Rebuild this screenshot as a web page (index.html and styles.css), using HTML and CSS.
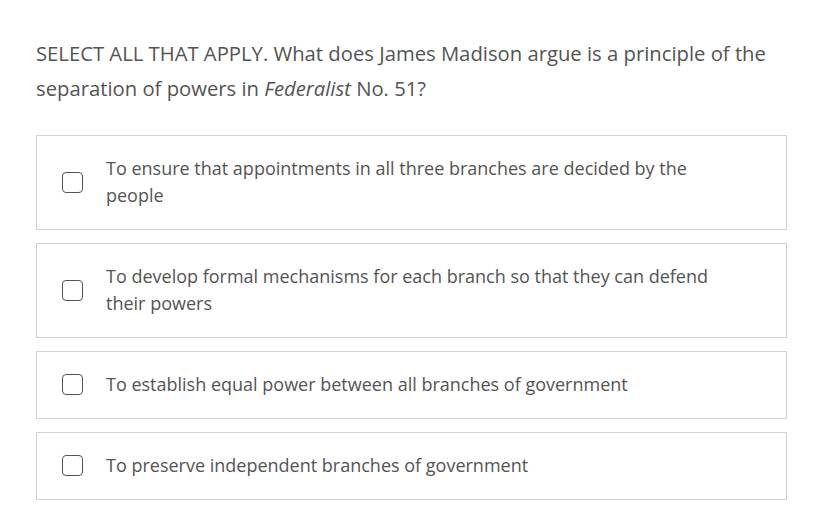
FILE: index.html
```html
<!DOCTYPE html>
<html lang="en">

<head>
    <meta charset="UTF-8">
    <meta name="viewport" content="width=device-width, initial-scale=1.0">
    <title>Question</title>
    <link rel="stylesheet" href="styles.css">
</head>

<body>
    <div class="question">
        <p class="question__prompt">SELECT ALL THAT APPLY. What does James Madison argue is a principle of the separation of powers in <em>Federalist</em> No. 51?</p>

        <div class="choices">
            <label class="choice">
                <input type="checkbox">
                <span class="choice__box"></span>
                <span class="choice__text">To ensure that appointments in all three branches are decided by the people</span>
            </label>

            <label class="choice">
                <input type="checkbox">
                <span class="choice__box"></span>
                <span class="choice__text">To develop formal mechanisms for each branch so that they can defend their powers</span>
            </label>

            <label class="choice">
                <input type="checkbox">
                <span class="choice__box"></span>
                <span class="choice__text">To establish equal power between all branches of government</span>
            </label>

            <label class="choice">
                <input type="checkbox">
                <span class="choice__box"></span>
                <span class="choice__text">To preserve independent branches of government</span>
            </label>
        </div>
    </div>
</body>

</html>
```

FILE: styles.css
```css
body {
    margin: 0;
    padding: 36px 37px 20px 36px;
    background-color: white;
    color: #545454;
    font-family: "Open Sans", "Liberation Sans", Arial, sans-serif;
}

.question__prompt {
    margin: 0 0 29px;
    font-size: 20.25px;
    line-height: 35px;
}

.choices {
    display: flex;
    flex-direction: column;
    gap: 13px;
}

.choice {
    display: flex;
    align-items: center;
    gap: 23px;
    padding: 19px 50px 20px 25px;
    border: 1px solid #d2d2d2;
    cursor: pointer;
}

.choice input {
    display: none;
}

.choice__box {
    flex-shrink: 0;
    width: 19px;
    height: 19px;
    border: 1.5px solid #555;
    border-radius: 4px;
}

.choice input:checked + .choice__box {
    background-color: #555;
}

.choice__text {
    font-size: 18px;
    line-height: 27px;
}
```
